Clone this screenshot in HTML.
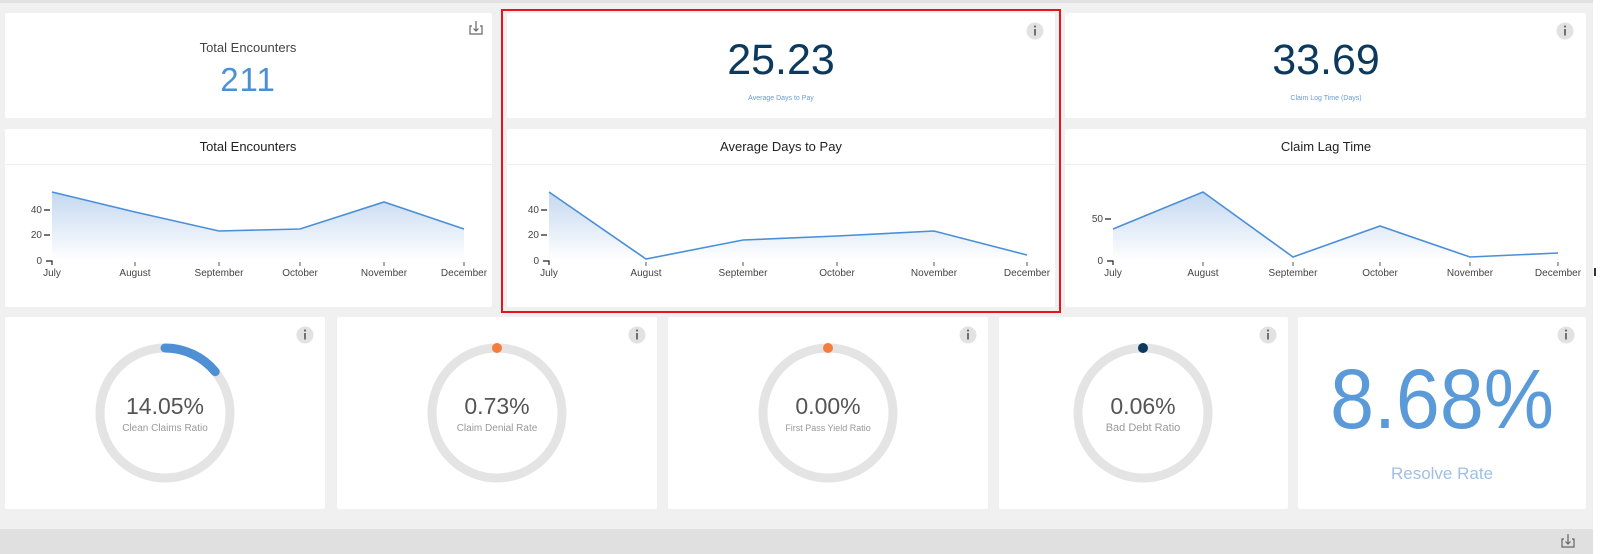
<!DOCTYPE html>
<html><head><meta charset="utf-8">
<style>
html,body{margin:0;padding:0;width:1600px;height:554px;overflow:hidden;background:#f0f0f0;font-family:"Liberation Sans",sans-serif;}
svg{position:absolute;left:0;top:0;}
</style></head>
<body>
<svg width="1600" height="554" viewBox="0 0 1600 554" xmlns="http://www.w3.org/2000/svg" font-family="Liberation Sans, sans-serif">
<defs>
<linearGradient id="g" x1="0" y1="0" x2="0" y2="1">
<stop offset="0" stop-color="#c4d8f0"/><stop offset="1" stop-color="#ffffff"/>
</linearGradient>
<g id="info"><circle r="8.5" fill="#e2e2e2"/><rect x="-0.9" y="-2" width="1.8" height="6.5" fill="#666"/><circle cy="-4.5" r="1.1" fill="#666"/></g>
<g id="dl" fill="none" stroke="#666" stroke-width="1.2"><path d="M-4,-2 H-6 V6 H6 V-2 H4"/><path d="M0,-7 V3 M-2.5,0.5 L0,3 L2.5,0.5"/></g>
</defs>
<rect x="0" y="0" width="1600" height="3" fill="#e2e2e2"/>
<rect x="1593" y="0" width="7" height="554" fill="#fff"/>
<rect x="1594" y="268" width="2" height="8" fill="#333"/>
<rect x="0" y="529" width="1593" height="25" fill="#e0e0e0"/>
<use href="#dl" x="1568" y="541"/>

<rect x="5" y="13" width="487" height="105" rx="2" fill="#fff"/>
<rect x="507" y="13" width="548" height="105" rx="2" fill="#fff"/>
<rect x="1065" y="13" width="521" height="105" rx="2" fill="#fff"/>
<text x="248" y="52" text-anchor="middle" font-size="13" fill="#444">Total Encounters</text>
<text x="248" y="91" text-anchor="middle" font-size="33" fill="#4a90d9" letter-spacing="1">211</text>
<use href="#dl" x="476" y="28"/>
<text x="781" y="74" text-anchor="middle" font-size="43" fill="#0d3a5c">25.23</text>
<text x="781" y="100" text-anchor="middle" font-size="7" fill="#6a9ad0">Average Days to Pay</text>
<use href="#info" x="1035" y="31"/>
<text x="1326" y="74" text-anchor="middle" font-size="43" fill="#0d3a5c">33.69</text>
<text x="1326" y="100" text-anchor="middle" font-size="7" fill="#6a9ad0">Claim Log Time (Days)</text>
<use href="#info" x="1565" y="31"/>

<rect x="5" y="129" width="487" height="178" rx="2" fill="#fff"/>
<rect x="507" y="129" width="548" height="178" rx="2" fill="#fff"/>
<rect x="1065" y="129" width="521" height="178" rx="2" fill="#fff"/>
<rect x="5" y="164" width="487" height="1" fill="#eee"/>
<rect x="507" y="164" width="548" height="1" fill="#eee"/>
<rect x="1065" y="164" width="521" height="1" fill="#eee"/>
<text x="248" y="151" text-anchor="middle" font-size="13" fill="#222">Total Encounters</text>
<text x="781" y="151" text-anchor="middle" font-size="13" fill="#222">Average Days to Pay</text>
<text x="1326" y="151" text-anchor="middle" font-size="13" fill="#222">Claim Lag Time</text>

<g font-size="10" fill="#444">
<path d="M52,192 L135,212 L219,231 L300,229 L384,202 L464,229 L464,261 L52,261Z" fill="url(#g)"/>
<path d="M52,192 L135,212 L219,231 L300,229 L384,202 L464,229" fill="none" stroke="#4a8fd8" stroke-width="1.6"/>
<g text-anchor="end"><text x="42" y="213">40</text><text x="42" y="238">20</text><text x="42" y="264">0</text></g>
<path d="M44,210H50M44,235H50M46,261H52V265" stroke="#222" stroke-width="1.2" fill="none"/>
<g stroke="#555" stroke-width="1"><path d="M135,262V266M219,262V266M300,262V266M384,262V266M464,262V266"/></g>
<g text-anchor="middle"><text x="52" y="276">July</text><text x="135" y="276">August</text><text x="219" y="276">September</text><text x="300" y="276">October</text><text x="384" y="276">November</text><text x="464" y="276">December</text></g>
<path d="M549,192 L646,259 L743,240 L837,236 L934,231 L1027,255 L1027,261 L549,261Z" fill="url(#g)"/>
<path d="M549,192 L646,259 L743,240 L837,236 L934,231 L1027,255" fill="none" stroke="#4a8fd8" stroke-width="1.6"/>
<g text-anchor="end"><text x="539" y="213">40</text><text x="539" y="238">20</text><text x="539" y="264">0</text></g>
<path d="M541,210H547M541,235H547M543,261H549V265" stroke="#222" stroke-width="1.2" fill="none"/>
<g stroke="#555" stroke-width="1"><path d="M646,262V266M743,262V266M837,262V266M934,262V266M1027,262V266"/></g>
<g text-anchor="middle"><text x="549" y="276">July</text><text x="646" y="276">August</text><text x="743" y="276">September</text><text x="837" y="276">October</text><text x="934" y="276">November</text><text x="1027" y="276">December</text></g>
<path d="M1113,229 L1203,192 L1293,257 L1380,226 L1470,257 L1558,253 L1558,261 L1113,261Z" fill="url(#g)"/>
<path d="M1113,229 L1203,192 L1293,257 L1380,226 L1470,257 L1558,253" fill="none" stroke="#4a8fd8" stroke-width="1.6"/>
<g text-anchor="end"><text x="1103" y="222">50</text><text x="1103" y="264">0</text></g>
<path d="M1105,219H1111M1107,261H1113V265" stroke="#222" stroke-width="1.2" fill="none"/>
<g stroke="#555" stroke-width="1"><path d="M1203,262V266M1293,262V266M1380,262V266M1470,262V266M1558,262V266"/></g>
<g text-anchor="middle"><text x="1113" y="276">July</text><text x="1203" y="276">August</text><text x="1293" y="276">September</text><text x="1380" y="276">October</text><text x="1470" y="276">November</text><text x="1558" y="276">December</text></g>
</g>

<rect x="502" y="10" width="558" height="302" fill="none" stroke="#e8141c" stroke-width="2"/>

<rect x="5" y="317" width="320" height="192" rx="2" fill="#fff"/>
<rect x="337" y="317" width="320" height="192" rx="2" fill="#fff"/>
<rect x="668" y="317" width="320" height="192" rx="2" fill="#fff"/>
<rect x="999" y="317" width="289" height="192" rx="2" fill="#fff"/>
<rect x="1298" y="317" width="288" height="192" rx="2" fill="#fff"/>
<use href="#info" x="305" y="335"/>
<use href="#info" x="637" y="335"/>
<use href="#info" x="968" y="335"/>
<use href="#info" x="1268" y="335"/>
<use href="#info" x="1566" y="335"/>

<g fill="none" stroke="#e4e4e4" stroke-width="9">
<circle cx="165" cy="413" r="65"/><circle cx="497" cy="413" r="65"/><circle cx="828" cy="413" r="65"/><circle cx="1143" cy="413" r="65"/>
</g>
<path d="M165,348 A65,65 0 0 1 215.2,371.7" fill="none" stroke="#4f8fd3" stroke-width="9" stroke-linecap="round"/>
<circle cx="497" cy="348" r="5" fill="#f47c3c"/>
<circle cx="828" cy="348" r="5" fill="#f47c3c"/>
<circle cx="1143" cy="348" r="5" fill="#0d3a5c"/>
<g text-anchor="middle">
<text x="165" y="414" font-size="23" fill="#555">14.05%</text>
<text x="165" y="431" font-size="10" fill="#999">Clean Claims Ratio</text>
<text x="497" y="414" font-size="23" fill="#555">0.73%</text>
<text x="497" y="431" font-size="10" fill="#999">Claim Denial Rate</text>
<text x="828" y="414" font-size="23" fill="#555">0.00%</text>
<text x="828" y="431" font-size="9" fill="#999">First Pass Yield Ratio</text>
<text x="1143" y="414" font-size="23" fill="#555">0.06%</text>
<text x="1143" y="431" font-size="11" fill="#999">Bad Debt Ratio</text>
<text x="1442" y="428" font-size="84" fill="#5a9ad8" transform="translate(1442 0) scale(0.94 1) translate(-1442 0)">8.68%</text>
<text x="1442" y="479" font-size="17" fill="#9ec0e6">Resolve Rate</text>
</g>
</svg>
</body></html>
